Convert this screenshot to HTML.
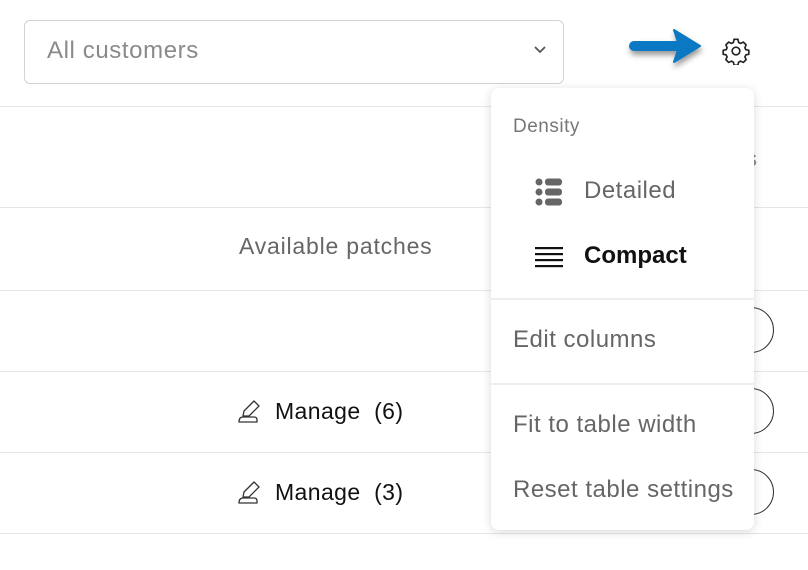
<!DOCTYPE html>
<html><head><style>
body{margin:0;width:808px;height:570px;background:#fff;font-family:"Liberation Sans",Arial,sans-serif;position:relative;overflow:hidden}
.a{position:absolute}
.line{position:absolute;left:0;width:808px;height:1px;background:#e6e6e6}
.circ{position:absolute;left:728px;width:44px;height:44px;border:1px solid #333;border-radius:50%}
.menu{position:absolute;left:491px;top:88px;width:263px;height:442px;background:#fff;border-radius:8px;box-shadow:0 2px 10px rgba(0,0,0,.15)}
.it{position:absolute;left:22px;font-size:24px;color:#666;letter-spacing:0.5px}
</style></head><body>
<div class="a" style="left:24px;top:20px;width:538px;height:62px;border:1px solid #d3d3d3;border-radius:6px"></div>
<div class="a" style="left:47px;top:37px;font-size:24px;color:#8a8a8a;letter-spacing:0.6px">All customers</div>
<svg class="a" style="left:533px;top:45px" width="14" height="10"><path d="M2 2l5 5 5-5" stroke="#555" stroke-width="1.8" fill="none"/></svg>
<svg class="a" style="left:626px;top:24px" width="84" height="48"><path d="M8 18h44l-4-12 26 16-26 16 4-12H8a3 3 0 0 1 0-8z" fill="#0a78c2" filter="drop-shadow(1px 4px 3px rgba(0,0,0,.4))" stroke="#0a78c2" stroke-width="2" stroke-linejoin="round"/></svg>
<svg class="a" style="left:722px;top:37px" width="28" height="28" viewBox="0 0 24 24"><path d="M10.3 2h3.4l.5 2.6 1.7.9 2.4-1.1 2.4 2.4-1.1 2.4.9 1.7 2.5.5v3.4l-2.5.5-.9 1.7 1.1 2.4-2.4 2.4-2.4-1.1-1.7.9-.5 2.6h-3.4l-.5-2.6-1.7-.9-2.4 1.1-2.4-2.4 1.1-2.4-.9-1.7-2.5-.5v-3.4l2.5-.5.9-1.7-1.1-2.4 2.4-2.4 2.4 1.1 1.7-.9z" fill="none" stroke="#222" stroke-width="1.4" stroke-linejoin="round"/><circle cx="12" cy="12" r="3.3" fill="none" stroke="#222" stroke-width="1.4"/></svg>
<div class="line" style="top:106px"></div>
<div class="line" style="top:207px"></div>
<div class="line" style="top:290px"></div>
<div class="line" style="top:371px"></div>
<div class="line" style="top:452px"></div>
<div class="line" style="top:533px"></div>
<div class="a" style="left:239px;top:233px;font-size:23px;color:#666;letter-spacing:0.8px">Available patches</div>
<div class="a" style="left:746px;top:146px;font-size:22px;color:#888">s</div>
<div class="circ" style="top:307px"></div>
<div class="circ" style="top:388px"></div>
<div class="circ" style="top:469px"></div>
<svg class="a" style="left:238px;top:398px" width="26" height="26" viewBox="0 0 26 26"><path d="M5 18l1-5L16 3l5 5-10 10zM1 24c0-3 1-5 4-5h11c2 0 3 1 3 3v2H1z" fill="none" stroke="#333" stroke-width="1.3" stroke-linejoin="round"/></svg>
<div class="a" style="left:275px;top:398px;font-size:23px;color:#111;letter-spacing:0.4px">Manage&nbsp;&nbsp;(6)</div>
<svg class="a" style="left:238px;top:479px" width="26" height="26" viewBox="0 0 26 26"><path d="M5 18l1-5L16 3l5 5-10 10zM1 24c0-3 1-5 4-5h11c2 0 3 1 3 3v2H1z" fill="none" stroke="#333" stroke-width="1.3" stroke-linejoin="round"/></svg>
<div class="a" style="left:275px;top:479px;font-size:23px;color:#111;letter-spacing:0.4px">Manage&nbsp;&nbsp;(3)</div>
<div class="menu">
<div class="it" style="top:28px;font-size:19px;color:#777">Density</div>
<svg class="a" style="left:44px;top:90px" width="28" height="28"><g fill="#666"><circle cx="4" cy="4" r="3.5"/><circle cx="4" cy="14" r="3.5"/><circle cx="4" cy="24" r="3.5"/><rect x="10" y="0.5" width="17" height="7" rx="3"/><rect x="10" y="10.5" width="17" height="7" rx="3"/><rect x="10" y="20.5" width="17" height="7" rx="3"/></g></svg>
<div class="it" style="left:93px;top:89px">Detailed</div>
<svg class="a" style="left:44px;top:158px" width="28" height="22"><g fill="#111"><rect y="1" width="28" height="2.2"/><rect y="7" width="28" height="2.2"/><rect y="13" width="28" height="2.2"/><rect y="19" width="28" height="2.2"/></g></svg>
<div class="it" style="left:93px;top:154px;color:#111;font-weight:bold;letter-spacing:0">Compact</div>
<div class="a" style="left:0;top:210px;width:263px;height:2px;background:#eee"></div>
<div class="it" style="top:238px">Edit columns</div>
<div class="a" style="left:0;top:295px;width:263px;height:2px;background:#eee"></div>
<div class="it" style="top:323px">Fit to table width</div>
<div class="it" style="top:388px">Reset table settings</div>
</div>
</body></html>
